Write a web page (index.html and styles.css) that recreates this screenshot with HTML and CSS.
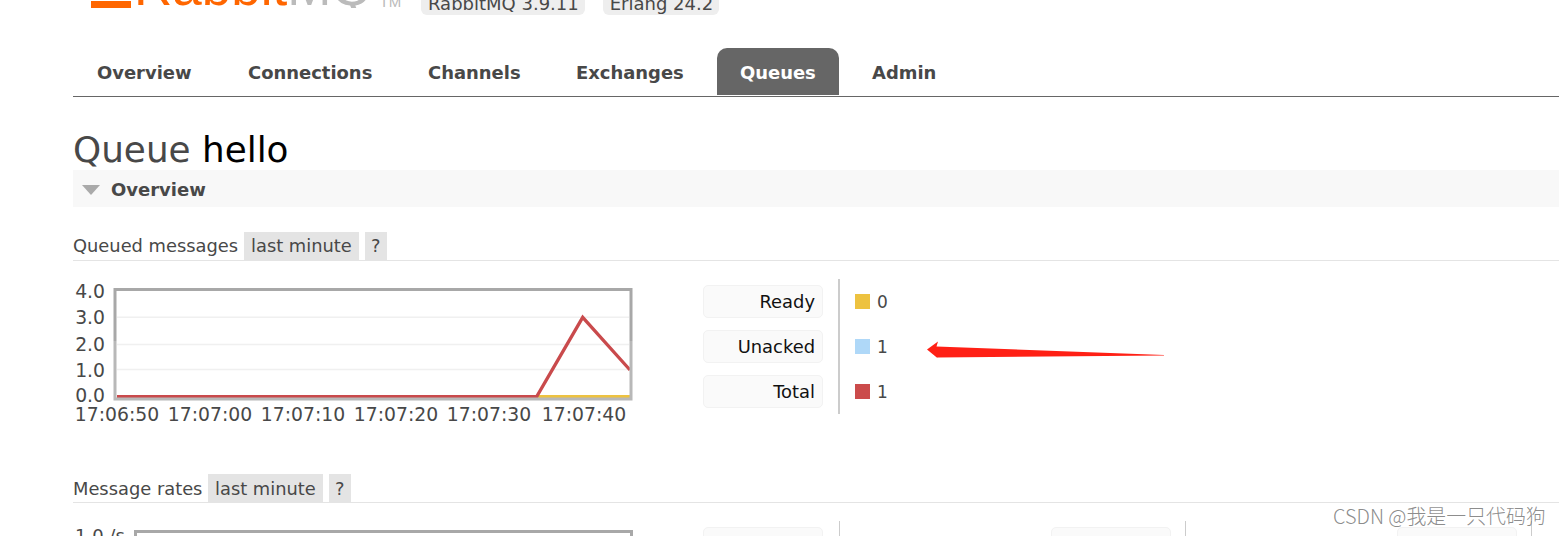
FILE: index.html
```html
<!DOCTYPE html>
<html lang="en">
<head>
<meta charset="utf-8">
<title>RabbitMQ Management</title>
<link rel="stylesheet" href="styles.css">
</head>
<body>
<div class="page">
  <header class="header">
    <div class="logo">
      <span class="logo-block"></span>
      <span class="logo-text"><span class="logo-rabbit">Rabbit</span><span class="logo-mq">MQ</span><span class="logo-tm">TM</span></span>
    </div>
    <ul class="versions">
      <li class="version">RabbitMQ 3.9.11</li>
      <li class="version">Erlang 24.2</li>
    </ul>
  </header>

  <nav class="tabs">
    <a class="tab tab-overview">Overview</a>
    <a class="tab tab-connections">Connections</a>
    <a class="tab tab-channels">Channels</a>
    <a class="tab tab-exchanges">Exchanges</a>
    <a class="tab tab-queues active">Queues</a>
    <a class="tab tab-admin">Admin</a>
  </nav>

  <h1 class="title">Queue <b class="title-name">hello</b></h1>

  <div class="section-head">
    <span class="triangle"></span>
    <h2 class="section-title">Overview</h2>
  </div>

  <div class="sub-head sub-head-first">
    <span class="sub-label">Queued messages</span>
    <span class="chip">last minute</span>
    <span class="chip chip-help">?</span>
  </div>

  <div class="chart-row">
    <svg class="chart" width="630" height="150" viewBox="73 0 630 150">
      <g class="ticks">
        <text x="105" y="27" text-anchor="end">4.0</text>
        <text x="105" y="53" text-anchor="end">3.0</text>
        <text x="105" y="80" text-anchor="end">2.0</text>
        <text x="105" y="106" text-anchor="end">1.0</text>
        <text x="105" y="131" text-anchor="end">0.0</text>
        <text x="117" y="150" text-anchor="middle">17:06:50</text>
        <text x="210" y="150" text-anchor="middle">17:07:00</text>
        <text x="303" y="150" text-anchor="middle">17:07:10</text>
        <text x="396" y="150" text-anchor="middle">17:07:20</text>
        <text x="489" y="150" text-anchor="middle">17:07:30</text>
        <text x="584" y="150" text-anchor="middle">17:07:40</text>
      </g>
      <path class="grid" d="M117 46.300H629M117 73.500H629M117 98.500H629"/>
      <path class="line-yellow" d="M537 125.700H630"/>
      <path class="line-red" d="M117 125.700H536.700L582.700 46.300L630 99"/>
      <path class="frame-light" d="M113.500 128H632.500M115 70V129M631 70V129"/>
      <path class="frame" d="M115 70V18.500H631V70"/>
    </svg>

    <div class="legend">
      <div class="legend-labels">
        <div class="legend-label">Ready</div>
        <div class="legend-label">Unacked</div>
        <div class="legend-label">Total</div>
      </div>
      <div class="legend-values">
        <div class="legend-value"><span class="swatch swatch-yellow"></span>0</div>
        <div class="legend-value"><span class="swatch swatch-blue"></span>1</div>
        <div class="legend-value"><span class="swatch swatch-red"></span>1</div>
      </div>
    </div>
  </div>

  <div class="sub-head sub-head-second">
    <span class="sub-label">Message rates</span>
    <span class="chip">last minute</span>
    <span class="chip chip-help">?</span>
  </div>

  <div class="rates-row">
    <div class="rates-chart">
      <span class="rates-tick">1.0 /s</span>
      <span class="rates-plot"></span>
    </div>
    <div class="rates-cols">
      <div class="rates-col rates-col-1"><span class="stub"></span></div>
      <div class="rates-col rates-col-2"><span class="stub"></span></div>
      <div class="rates-col rates-col-3"><span class="stub"></span></div>
    </div>
  </div>
</div>

<svg class="arrow" width="240" height="24" viewBox="0 0 240 24">
  <path d="M0 9.500L11 1.500L9.500 6.500L237 15V15.500L10 17.500L11 18.500Z"/>
</svg>
<div class="watermark">CSDN @我是一只代码狗</div>
</body>
</html>
```

FILE: styles.css
```css
* { box-sizing: border-box; }

html, body {
  margin: 0;
  padding: 0;
  width: 1559px;
  height: 536px;
  overflow: hidden;
  background: #fff;
}

body {
  position: relative;
  font-family: "DejaVu Sans", Verdana, sans-serif;
  color: #484848;
}

.page {
  height: 536px;
  padding-left: 73px;
  overflow: hidden;
}

/* Header, cropped at the top of the screenshot */
.header {
  height: 48px;
  display: flex;
  align-items: flex-start;
  overflow: hidden;
}

.logo {
  flex: none;
  width: 348px;
  height: 8px;
  padding-left: 18px;
  display: flex;
  align-items: flex-end;
  gap: 5px;
  overflow: hidden;
}

.logo-block {
  flex: none;
  width: 40px;
  height: 7px;
  background: #f60;
}

.logo-text {
  flex: none;
  font-family: "Liberation Sans", Arial, sans-serif;
  font-size: 53px;
  height: 8px;
  display: flex;
  align-items: flex-end;
  margin-left: -2px;
}

.logo-rabbit { color: #f60; line-height: 0; transform: translateY(-21px); }
.logo-mq { color: #bbb; line-height: 0; transform: translateY(-21px); }
.logo-tm { color: #bbb; font-size: 15px; line-height: 0; margin-left: 7px; transform: translateY(-6px); }

.versions {
  list-style: none;
  margin: 0;
  padding: 0;
  display: flex;
  gap: 18px;
}

.version {
  height: 15px;
  padding: 0 6px 5px 7px;
  display: flex;
  align-items: flex-end;
  background: #eee;
  border-radius: 0 0 6px 6px;
  font-size: 18px;
  line-height: 12px;
  white-space: nowrap;
}

/* Tabs */
.tabs {
  height: 49px;
  display: flex;
  border-bottom: 1px solid #666;
  font-size: 17.950px;
  font-weight: 700;
}

.tab {
  height: 47px;
  padding-top: 13px;
  line-height: 24px;
  white-space: nowrap;
}

.tab-overview { margin-left: 24px; width: 151px; }
.tab-connections { width: 180px; }
.tab-channels { width: 148px; }
.tab-exchanges { width: 141px; }
.tab-queues {
  width: 122px;
  padding-left: 23px;
  background: #666;
  color: #fff;
  border-radius: 10px 10px 0 0;
}
.tab-admin { margin-left: 33px; }

/* Title */
.title {
  margin: 0;
  height: 73px;
  padding-top: 29px;
  font-size: 35.800px;
  line-height: 48px;
  font-weight: 400;
  white-space: nowrap;
}

.title-name { font-weight: 400; color: #000; }

/* Section */
.section-head {
  height: 37px;
  display: flex;
  align-items: center;
  background: #f8f8f8;
}

.triangle {
  width: 0;
  height: 0;
  margin: 2px 11px 0 9px;
  border-left: 9px solid transparent;
  border-right: 9px solid transparent;
  border-top: 10px solid #aaa;
}

.section-title {
  margin: 2px 0 0;
  font-size: 18px;
  line-height: 24px;
  font-weight: 700;
}

.sub-head {
  height: 29px;
  display: flex;
  align-items: stretch;
  border-bottom: 1px solid #e4e4e4;
  font-size: 17.850px;
  line-height: 27px;
  white-space: nowrap;
}

.sub-head-first { margin-top: 25px; }
.sub-head-second { line-height: 29px; }

.sub-label { width: 165px; }
.sub-head-second .sub-label { width: 129px; }

.chip {
  height: 28px;
  margin-left: 6px;
  padding: 0 7px;
  background: #e4e4e4;
}

.chip-help {
  width: 22px;
  padding: 0;
  text-align: center;
}

/* Queued messages chart */
.chart-row {
  height: 213px;
  display: flex;
}

.chart {
  flex: none;
  width: 630px;
  height: 150px;
  margin-top: 10px;
  display: block;
  overflow: visible;
}

.ticks text {
  font-family: "DejaVu Sans", Verdana, sans-serif;
  font-size: 18.800px;
  fill: #484848;
}

.grid { stroke: #f0f0f0; stroke-width: 1.500; fill: none; }
.frame { stroke: #a8a8a8; stroke-width: 3; fill: none; }
.frame-light { stroke: #b8b8b8; stroke-width: 3; fill: none; }
.line-red { stroke: #c94a4c; stroke-width: 3.300; fill: none; }
.line-yellow { stroke: #edc240; stroke-width: 3.300; fill: none; }

.legend {
  height: 135px;
  margin-top: 18px;
  display: flex;
}

.legend-labels {
  width: 137px;
  padding: 6px 0 0 0;
  display: flex;
  flex-direction: column;
  gap: 12px;
  border-right: 2px solid #ccc;
}

.legend-label {
  width: 120px;
  height: 33px;
  padding-right: 7px;
  text-align: right;
  background: #fafafa;
  border: 1px solid #f2f2f2;
  border-radius: 5px;
  font-size: 17.900px;
  line-height: 31px;
  color: #111;
}

.legend-values {
  padding: 6px 0 0 15px;
  display: flex;
  flex-direction: column;
  gap: 12px;
}

.legend-value {
  height: 33px;
  display: flex;
  align-items: center;
  gap: 7px;
  font-size: 17px;
}

.swatch { width: 15px; height: 15px; }
.swatch-yellow { background: #edc240; }
.swatch-blue { background: #afd8f8; }
.swatch-red { background: #cb4b4b; }

/* Message rates, cropped by the bottom edge */
.rates-row {
  height: 40px;
  display: flex;
}

.rates-chart {
  flex: none;
  width: 630px;
  height: 40px;
  display: flex;
  align-items: flex-start;
  padding: 27px 0 0 2px;
}

.rates-tick {
  flex: none;
  width: 59px;
  margin-top: -3px;
  font-size: 18px;
  line-height: 18px;
  white-space: nowrap;
}

.rates-plot {
  flex: none;
  width: 499px;
  height: 20px;
  border: 3px solid #a8a8a8;
}

.rates-cols { display: flex; }

.rates-col {
  height: 40px;
  margin-top: 18px;
  border-right: 1px solid #ccc;
}

.rates-col-1 { width: 137px; }
.rates-col-2 { width: 346px; }
.rates-col-3 { width: 346px; }

.stub {
  display: block;
  width: 120px;
  height: 20px;
  margin-top: 6px;
  background: #fafafa;
  border: 1px solid #f2f2f2;
  border-radius: 5px;
}

.rates-col-2 .stub { margin-left: 211px; }
.rates-col-3 .stub { margin-left: 211px; }

/* Overlays */
.arrow {
  position: absolute;
  left: 927px;
  top: 340px;
  width: 240px;
  height: 24px;
}

.arrow path { fill: #ff2015; }

.watermark {
  position: absolute;
  left: 1333px;
  top: 504px;
  font-family: "Noto Sans CJK SC", "Liberation Sans", sans-serif;
  font-size: 19.900px;
  line-height: 24px;
  font-weight: 300;
  color: rgba(110, 110, 110, .8);
  white-space: nowrap;
}
```
